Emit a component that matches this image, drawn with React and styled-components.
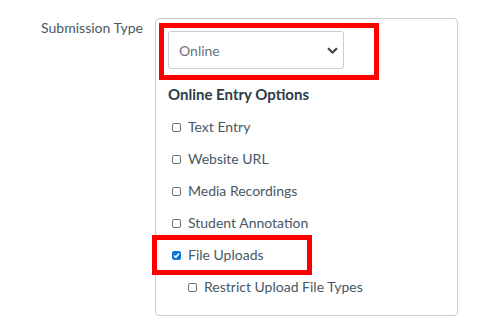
import React from 'react';
import styled, { createGlobalStyle } from 'styled-components';

const GlobalStyle = createGlobalStyle`
  body {
    margin: 0;
    background: #fff;
    font-family: Lato, "Open Sans", sans-serif;
  }
`;

const Page = styled.div`
  display: flex;
  align-items: flex-start;
  padding: 18px 0 0 30px;
`;

const FieldLabel = styled.div`
  width: 125px;
  box-sizing: border-box;
  padding-right: 12px;
  text-align: right;
  font-size: 14px;
  line-height: 20px;
  color: #485863;
`;

const Panel = styled.div`
  position: relative;
  width: 303px;
  box-sizing: border-box;
  border: 1px solid #c7cdd1;
  border-radius: 4px;
  padding: 12px 12px 18px;
`;

const SelectBox = styled.div`
  width: 176px;
  height: 38px;
  box-sizing: border-box;
  border: 1px solid #c7cdd1;
  border-radius: 3px;
  display: flex;
  align-items: center;
  justify-content: space-between;
  padding: 0 5px 0 10px;
  font-size: 14px;
  color: #6b747e;
`;

const Heading = styled.div`
  margin-top: 15px;
  font-size: 15px;
  line-height: 20px;
  font-weight: 700;
  color: #2d3b45;
`;

const OptionList = styled.div`
  margin-top: 13px;
  display: flex;
  flex-direction: column;
  gap: 12px;
`;

const OptionRow = styled.label`
  display: flex;
  align-items: center;
  gap: 7px;
  padding-left: ${p => (p.$nested ? 20 : 4)}px;
  font-size: 14px;
  line-height: 20px;
  color: #485863;
`;

const Box = styled.span`
  width: 9px;
  height: 9px;
  box-sizing: border-box;
  border-radius: 2px;
  border: 1px solid ${p => (p.$checked ? '#0b74de' : '#6f6f6f')};
  background: ${p => (p.$checked ? '#0b74de' : '#fff')};
  display: flex;
  align-items: center;
  justify-content: center;
  margin-top: 1px;
`;

const Highlight = styled.div`
  position: absolute;
  left: ${p => p.$x}px;
  top: ${p => p.$y}px;
  width: ${p => p.$w}px;
  height: ${p => p.$h}px;
  box-sizing: border-box;
  border: 5px solid #ff0000;
  pointer-events: none;
`;

const Chevron = () => (
  <svg width="11" height="7" viewBox="0 0 11 7">
    <path d="M1 1.2 L5.5 5.5 L10 1.2" fill="none" stroke="#444" strokeWidth="2.2" />
  </svg>
);

const Check = () => (
  <svg width="7" height="7" viewBox="0 0 7 7">
    <path d="M1 3.6 L2.8 5.3 L6 1.4" fill="none" stroke="#fff" strokeWidth="1.5" />
  </svg>
);

const Option = ({ label, checked, nested }) => (
  <OptionRow $nested={nested}>
    <Box $checked={checked}>{checked && <Check />}</Box>
    {label}
  </OptionRow>
);

const options = [
  { label: 'Text Entry' },
  { label: 'Website URL' },
  { label: 'Media Recordings' },
  { label: 'Student Annotation' },
  { label: 'File Uploads', checked: true },
  { label: 'Restrict Upload File Types', nested: true },
];

const App = () => (
  <>
    <GlobalStyle />
    <Page>
      <FieldLabel>Submission Type</FieldLabel>
      <Panel>
        <SelectBox>
          <span>Online</span>
          <Chevron />
        </SelectBox>
        <Heading>Online Entry Options</Heading>
        <OptionList>
          {options.map(o => (
            <Option key={o.label} {...o} />
          ))}
        </OptionList>
        <Highlight $x={3} $y={4} $w={220} $h={57} />
        <Highlight $x={-4} $y={216} $w={160} $h={40} />
      </Panel>
    </Page>
  </>
);

export default App;
